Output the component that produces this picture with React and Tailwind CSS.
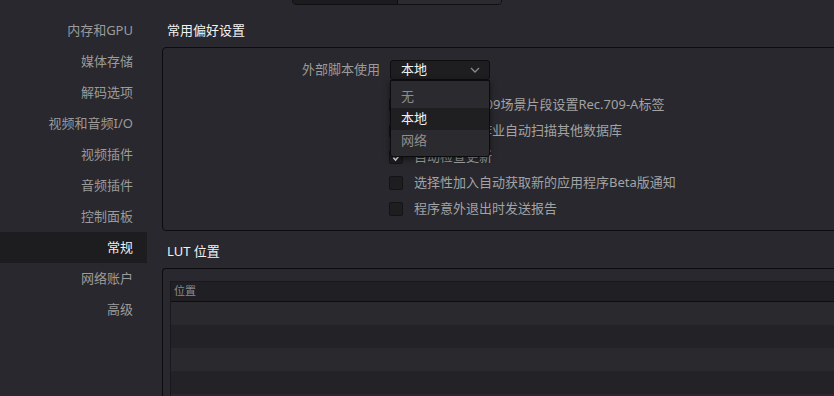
const font = { fontFamily: '"Noto Sans", "Noto Sans CJK SC", sans-serif' }

const navItems = ['内存和GPU', '媒体存储', '解码选项', '视频和音频I/O', '视频插件', '音频插件', '控制面板', '常规', '网络账户', '高级']

const checks = [
  { label: '自动为Rec.709场景片段设置Rec.709-A标签', checked: false },
  { label: '多用户协同作业自动扫描其他数据库', checked: false },
  { label: '自动检查更新', checked: true },
  { label: '选择性加入自动获取新的应用程序Beta版通知', checked: false },
  { label: '程序意外退出时发送报告', checked: false },
]

function Checkbox({ checked }) {
  return (
    <div className="w-[14px] h-[14px] rounded-[2px] border border-[#141416] bg-[#1e1e21] flex items-center justify-center">
      {checked && (
        <svg width="9" height="9" viewBox="0 0 10 10">
          <path d="M1.5 5.2 L4 7.8 L8.6 2.2" fill="none" stroke="#f0f0f0" strokeWidth="1.8" />
        </svg>
      )}
    </div>
  )
}

export default function App() {
  return (
    <div className="w-[834px] h-[396px] overflow-hidden bg-[#28282e] flex text-[13px]" style={font}>
      {/* 左侧导航 */}
      <div className="w-[147px] shrink-0 pt-[15px] flex flex-col">
        {navItems.map((item) => (
          <div
            key={item}
            className={
              'h-[31px] flex items-center justify-end pr-[14px] ' +
              (item === '常规' ? 'bg-[#1d1d20] text-[#f2f2f2]' : 'text-[#9b9b9b]')
            }
          >
            {item}
          </div>
        ))}
      </div>

      {/* 主区域 */}
      <div className="ml-[15px] flex-1 flex flex-col min-w-0">
        {/* 顶部切换 */}
        <div className="h-[5px] overflow-visible">
          <div className="ml-[130px] -mt-[17px] w-[210px] h-[22px] flex border border-[#101012] rounded-b-[4px] overflow-hidden text-[13px]">
            <div className="w-[104px] bg-[#1c1c1f] text-[#f0f0f0] flex items-center justify-center">系统</div>
            <div className="flex-1 border-l border-[#101012] bg-[#2a2a2f] text-[#8a8a8a] flex items-center justify-center">用户</div>
          </div>
        </div>

        <div className="h-[42px] pt-[10px] pl-[5px] flex items-center text-[#f2f2f2]">常用偏好设置</div>

        {/* 常用偏好设置 */}
        <div className="relative h-[184px] -mr-[10px] border border-[#0c0c0e] rounded-l-[4px] pt-[12px]">
          <div className="flex items-center h-[20px]">
            <div className="w-[217px] text-right text-[#9b9b9b]">外部脚本使用</div>
            <div className="ml-[10px] w-[100px] h-[20px] bg-[#1e1e21] border border-[#0e0e10] rounded-[3px] flex items-center justify-between pl-[10px] pr-[9px] text-[#f2f2f2]">
              <span>本地</span>
              <svg width="10" height="6" viewBox="0 0 10 6">
                <path d="M1 1 L5 5 L9 1" fill="none" stroke="#8a8a8a" strokeWidth="1.3" />
              </svg>
            </div>
          </div>

          <div className="mt-[12px] flex flex-col">
            {checks.map((c) => (
              <div key={c.label} className="h-[26px] flex items-center pl-[226px] gap-[11px] text-[#a3a3a3]">
                <Checkbox checked={c.checked} />
                <span>{c.label}</span>
              </div>
            ))}
          </div>

          {/* 下拉菜单 */}
          <div className="absolute left-[227px] top-[32px] w-[100px] h-[77px] bg-[#2a2a2f] border border-[#0c0c0e] rounded-b-[3px] shadow-[0_2px_6px_rgba(0,0,0,0.5)] pt-[5px] flex flex-col">
            <div className="h-[22px] flex items-center pl-[10px] text-[#8e8e8e]">无</div>
            <div className="h-[22px] flex items-center pl-[10px] bg-[#1f1f22] text-[#f2f2f2]">本地</div>
            <div className="h-[22px] flex items-center pl-[10px] text-[#8e8e8e]">网络</div>
          </div>
        </div>

        <div className="h-[37px] pt-[5px] pl-[5px] flex items-center text-[#f2f2f2]">LUT 位置</div>

        {/* LUT 位置 */}
        <div className="flex-1 -mr-[10px] border-t border-l border-[#0c0c0e] rounded-tl-[4px] pt-[12px] pl-[7px]">
          <div className="border-l border-t border-[#19191c] h-full flex flex-col">
            <div className="h-[20px] bg-[#202024] border-b border-[#0e0e10] flex items-center pl-[3px] text-[11px] text-[#8a8a8a]">位置</div>
            <div className="h-[23px] bg-[#29292e]" />
            <div className="h-[23px] bg-[#232327]" />
            <div className="h-[23px] bg-[#29292e]" />
            <div className="h-[23px] bg-[#232327]" />
          </div>
        </div>
      </div>
    </div>
  )
}
